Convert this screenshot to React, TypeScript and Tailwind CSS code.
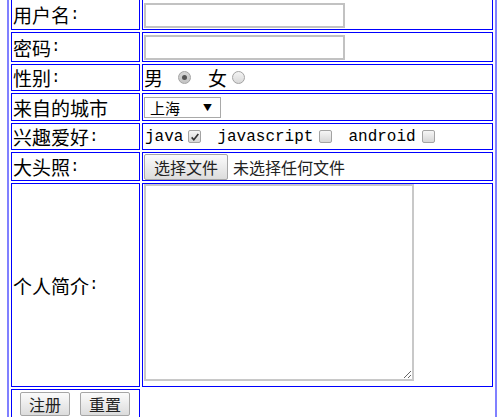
import React from "react";

const cjk = "font-['Noto_Sans_CJK_SC',sans-serif]";
const mono = "font-['Liberation_Mono','Noto_Sans_CJK_SC',monospace]";

function Label({ text, colon = true }: { text: string; colon?: boolean }) {
  return (
    <div className={`flex items-center border border-[#0000ff] pl-[1px] text-[19px] leading-none text-black ${cjk}`}>
      <span>{text}</span>
      {colon && <span className={`${mono} text-[16px]`}>:</span>}
    </div>
  );
}

function Radio({ checked }: { checked?: boolean }) {
  return (
    <span
      className={`flex h-[13px] w-[13px] items-center justify-center rounded-full border border-[#a3a3a3] ${
        checked ? "bg-linear-to-b from-[#d6d6d6] to-[#c4c4c4]" : "bg-linear-to-b from-[#f4f4f4] to-[#d8d8d8]"
      }`}
    >
      {checked && <span className="h-[5px] w-[5px] rounded-full bg-[#555]" />}
    </span>
  );
}

function Checkbox({ checked }: { checked?: boolean }) {
  return (
    <span className="flex h-[13px] w-[13px] items-center justify-center rounded-[2px] border border-[#a3a3a3] bg-linear-to-b from-[#f6f6f6] to-[#d6d6d6]">
      {checked && (
        <svg viewBox="0 0 12 12" className="h-[10px] w-[10px]" aria-hidden>
          <path d="M2 6.5l2.6 2.8L10 2.5" fill="none" stroke="#333" strokeWidth="2" />
        </svg>
      )}
    </span>
  );
}

function Btn({ children, w }: { children: React.ReactNode; w: string }) {
  return (
    <button
      type="button"
      className={`${w} flex items-center justify-center rounded-[2px] border border-[#a6a6a6] bg-linear-to-b from-[#fbfbfb] to-[#dcdcdc] text-[16px] leading-none text-[#222] ${cjk}`}
    >
      {children}
    </button>
  );
}

const cell = "flex border border-[#0000ff] pl-[1px]";
const input = "h-[25px] w-[201px] border-2 border-[#c2c2c2] bg-white";

export default function App() {
  return (
    <div className="h-[417px] overflow-hidden bg-white">
      <div className="ml-[7px] -mt-[5px] grid w-[490px] grid-cols-[129px_351px] grid-rows-[31px_30px_27px_28px_27px_29px_204px_30px] gap-[2px] border-2 border-[#8080ff] p-[2px]">
        <Label text="用户名" />
        <div className={`${cell} items-start pt-[3px]`}>
          <input className={input} />
        </div>

        <Label text="密码" />
        <div className={`${cell} items-start pt-[2px]`}>
          <input type="password" className={input} />
        </div>

        <Label text="性别" />
        <div className={`${cell} items-center text-[19px] leading-none ${cjk}`}>
          <span>男</span>
          <span className="ml-[15px]"><Radio checked /></span>
          <span className="ml-[17px]">女</span>
          <span className="ml-[5px]"><Radio /></span>
        </div>

        <Label text="来自的城市" colon={false} />
        <div className={`${cell} items-center`}>
          <div className={`flex h-[21px] w-[77px] items-center justify-between border border-[#a9a9a9] bg-white pl-[5px] pr-[8px] text-[15px] leading-none ${cjk}`}>
            <span>上海</span>
            <span className="text-[9px]">▼</span>
          </div>
        </div>

        <Label text="兴趣爱好" />
        <div className={`${cell} items-center text-[16px] leading-none ${mono}`}>
          <span className="ml-[1px]">java</span>
          <span className="ml-[5px]"><Checkbox checked /></span>
          <span className="ml-[16px]">javascript</span>
          <span className="ml-[6px]"><Checkbox /></span>
          <span className="ml-[16px]">android</span>
          <span className="ml-[6px]"><Checkbox /></span>
        </div>

        <Label text="大头照" />
        <div className={`${cell} items-center`}>
          <Btn w="h-[26px] w-[84px]">选择文件</Btn>
          <span className={`ml-[5px] text-[16px] leading-none text-[#222] ${cjk}`}>未选择任何文件</span>
        </div>

        <Label text="个人简介" />
        <div className={`${cell} items-start`}>
          <textarea className="h-[197px] w-[270px] border-2 border-[#c8c8c8] bg-white" />
        </div>

        <div className="flex items-start gap-[10px] border border-[#0000ff] pl-[8px] pt-[2px]">
          <Btn w="h-[24px] w-[50px]">注册</Btn>
          <Btn w="h-[24px] w-[50px]">重置</Btn>
        </div>
      </div>
    </div>
  );
}
